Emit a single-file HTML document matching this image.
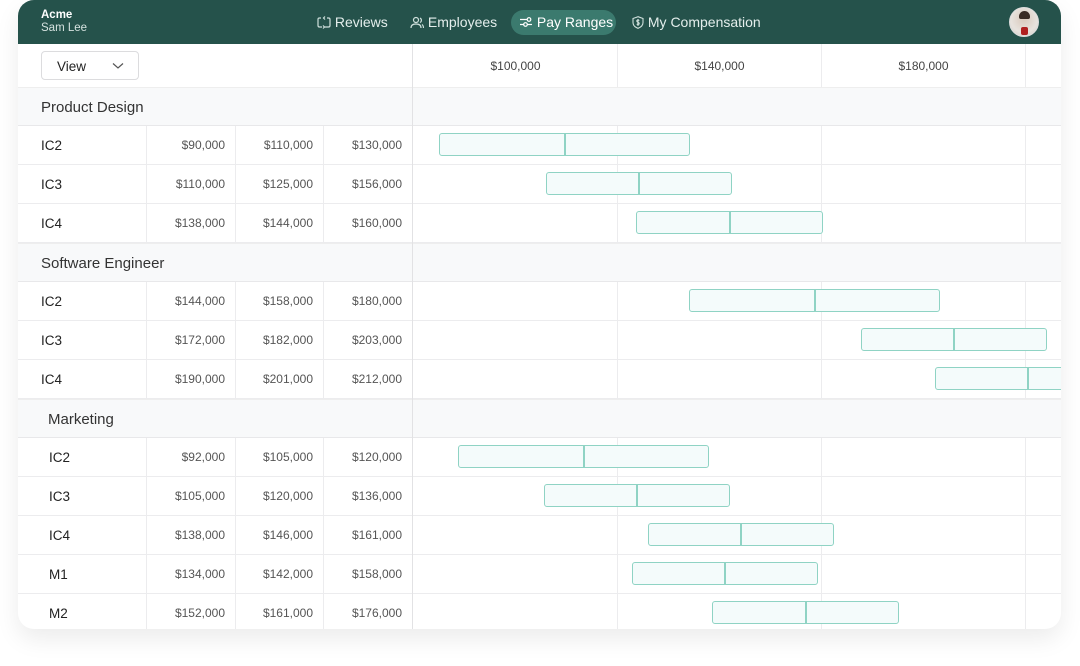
<!DOCTYPE html>
<html><head><meta charset="utf-8"><style>
*{margin:0;padding:0;box-sizing:border-box}
body{width:1080px;height:666px;background:#fff;font-family:"Liberation Sans",sans-serif;position:relative;overflow:hidden}
.card{position:absolute;left:18px;top:0;width:1043px;height:629px;border-radius:16px;overflow:hidden;background:#fff;box-shadow:0 10px 24px rgba(0,0,0,.08)}
.hdr{position:absolute;left:0;top:0;width:1043px;height:44px;background:#25524b;color:#fff;z-index:5}
.a{position:absolute;}
.g{position:absolute;left:0;width:1043px;height:39px;background:#f8f9fa;border-bottom:1px solid #e8e8ea;border-top:1px solid #eee;z-index:3}
.g span{position:absolute;top:11px;font-size:15px;color:#333}
.r{position:absolute;left:0;width:1043px;height:39px;border-bottom:1px solid #ececee}
.r .n{position:absolute;left:23px;top:12px;font-size:13.5px;color:#222}
.r .v{position:absolute;top:12px;font-size:12px;color:#555;text-align:right;width:80px}
.vl{position:absolute;top:44px;width:1px;height:585px;background:#ececee}
.bar{position:absolute;height:23px;border:1.5px solid #8fd3c4;border-radius:3px;background:#f4fbfb;z-index:2}
.bar i{position:absolute;top:0;width:1.5px;height:100%;background:#8fd3c4}
.nav{position:absolute;top:14px;font-size:14px;color:#e4eeec}
</style></head><body>
<div class="card">
<div class="hdr">
<div class="a" style="left:23px;top:9px;font-size:11.5px;font-weight:bold">Acme</div>
<div class="a" style="left:23px;top:22px;font-size:11.5px;color:#d5e2df">Sam Lee</div>
<div class="nav" style="left:299px">
<svg width="14" height="13" viewBox="0 0 14 13" style="vertical-align:-2px" fill="none" stroke="#cfe0dc" stroke-width="1.2"><path d="M4 2H2.5Q1 2 1 3.5V9.5Q1 11 2.5 11H5M10 2H11.5Q13 2 13 3.5V9.5Q13 11 11.5 11H7M6 9.5L7.5 11L6 12.5M8 0.5L6.5 2L8 3.5"/></svg> Reviews</div>
<div class="nav" style="left:392px">
<svg width="14" height="13" viewBox="0 0 14 13" style="vertical-align:-2px" fill="none" stroke="#cfe0dc" stroke-width="1.2"><circle cx="6" cy="4" r="2.5"/><path d="M1 12Q1 8 6 8Q11 8 11 12M10 2A2.5 2.5 0 0 1 10 6.5M12 8.5Q13.5 9.5 13.5 12"/></svg> Employees</div>
<div class="a" style="left:493px;top:10px;width:105px;height:25px;border-radius:13px;background:#3b7a6e"></div>
<div class="nav" style="left:501px;color:#fff">
<svg width="14" height="12" viewBox="0 0 14 12" style="vertical-align:-1px" fill="none" stroke="#fff" stroke-width="1.2"><path d="M1 3.5H8M1 8.5H4.5"/><circle cx="10" cy="3.5" r="1.8"/><circle cx="6.5" cy="8.5" r="1.8"/><path d="M8.5 8.5H13"/></svg> Pay Ranges</div>
<div class="nav" style="left:614px">
<svg width="12" height="13" viewBox="0 0 12 13" style="vertical-align:-2px" fill="none" stroke="#cfe0dc" stroke-width="1.1"><path d="M6 0.7L11 2.5V6.5Q11 10.5 6 12.3Q1 10.5 1 6.5V2.5Z"/><path d="M7.3 4.6Q6 3.7 5 4.4Q4.2 5.3 6 6.2Q7.8 7 7 8.2Q6 8.9 4.7 8"/><path d="M6 3V10"/></svg> My Compensation</div>
<div class="a" style="left:991px;top:7px;width:30px;height:30px;border-radius:50%;background:radial-gradient(circle at 50% 40%,#d9c9bc 0,#e8e3de 60%,#cfc8c2 100%);border:1px solid #ddd"><div class="a" style="left:11px;top:19px;width:7px;height:8px;background:#b02020;border-radius:2px"></div><div class="a" style="left:9px;top:3px;width:11px;height:8px;background:#3a2c25;border-radius:6px 6px 2px 2px"></div></div>
</div>
<div class="a" style="left:23px;top:51px;width:98px;height:29px;border:1px solid #dcdcde;border-radius:4px;font-size:13.5px;color:#222;padding:7px 0 0 15px">View<svg class="a" style="left:70px;top:10px" width="12" height="8" viewBox="0 0 12 8" fill="none" stroke="#555" stroke-width="1.2"><path d="M1 1.5L6 6L11 1.5"/></svg></div>
<div class="a" style="left:395px;top:59px;width:205px;text-align:center;font-size:12px;color:#444">$100,000</div>
<div class="a" style="left:599px;top:59px;width:205px;text-align:center;font-size:12px;color:#444">$140,000</div>
<div class="a" style="left:803px;top:59px;width:205px;text-align:center;font-size:12px;color:#444">$180,000</div>

<div class="g" style="top:87px"><span style="left:23px">Product Design</span></div>
<div class="r" style="top:126px"><span class="n">IC2</span><span class="v" style="left:127px">$90,000</span><span class="v" style="left:215px">$110,000</span><span class="v" style="left:304px">$130,000</span></div>
<div class="r" style="top:165px"><span class="n">IC3</span><span class="v" style="left:127px">$110,000</span><span class="v" style="left:215px">$125,000</span><span class="v" style="left:304px">$156,000</span></div>
<div class="r" style="top:204px"><span class="n">IC4</span><span class="v" style="left:127px">$138,000</span><span class="v" style="left:215px">$144,000</span><span class="v" style="left:304px">$160,000</span></div>
<div class="g" style="top:243px"><span style="left:23px">Software Engineer</span></div>
<div class="r" style="top:282px"><span class="n">IC2</span><span class="v" style="left:127px">$144,000</span><span class="v" style="left:215px">$158,000</span><span class="v" style="left:304px">$180,000</span></div>
<div class="r" style="top:321px"><span class="n">IC3</span><span class="v" style="left:127px">$172,000</span><span class="v" style="left:215px">$182,000</span><span class="v" style="left:304px">$203,000</span></div>
<div class="r" style="top:360px"><span class="n">IC4</span><span class="v" style="left:127px">$190,000</span><span class="v" style="left:215px">$201,000</span><span class="v" style="left:304px">$212,000</span></div>
<div class="g" style="top:399px"><span style="left:30px">Marketing</span></div>
<div class="r" style="top:438px"><span class="n" style="left:31px">IC2</span><span class="v" style="left:127px">$92,000</span><span class="v" style="left:215px">$105,000</span><span class="v" style="left:304px">$120,000</span></div>
<div class="r" style="top:477px"><span class="n" style="left:31px">IC3</span><span class="v" style="left:127px">$105,000</span><span class="v" style="left:215px">$120,000</span><span class="v" style="left:304px">$136,000</span></div>
<div class="r" style="top:516px"><span class="n" style="left:31px">IC4</span><span class="v" style="left:127px">$138,000</span><span class="v" style="left:215px">$146,000</span><span class="v" style="left:304px">$161,000</span></div>
<div class="r" style="top:555px"><span class="n" style="left:31px">M1</span><span class="v" style="left:127px">$134,000</span><span class="v" style="left:215px">$142,000</span><span class="v" style="left:304px">$158,000</span></div>
<div class="r" style="top:594px;border-bottom:none"><span class="n" style="left:31px">M2</span><span class="v" style="left:127px">$152,000</span><span class="v" style="left:215px">$161,000</span><span class="v" style="left:304px">$176,000</span></div>

<div class="a" style="left:128px;top:126px;width:1px;height:117px;background:#ececee"></div>
<div class="a" style="left:217px;top:126px;width:1px;height:117px;background:#ececee"></div>
<div class="a" style="left:305px;top:126px;width:1px;height:117px;background:#ececee"></div>
<div class="a" style="left:128px;top:282px;width:1px;height:117px;background:#ececee"></div>
<div class="a" style="left:217px;top:282px;width:1px;height:117px;background:#ececee"></div>
<div class="a" style="left:305px;top:282px;width:1px;height:117px;background:#ececee"></div>
<div class="a" style="left:128px;top:438px;width:1px;height:191px;background:#ececee"></div>
<div class="a" style="left:217px;top:438px;width:1px;height:191px;background:#ececee"></div>
<div class="a" style="left:305px;top:438px;width:1px;height:191px;background:#ececee"></div>
<div class="vl" style="left:394px;background:#e2e2e4;z-index:4"></div>
<div class="vl" style="left:599px"></div>
<div class="vl" style="left:803px"></div>
<div class="vl" style="left:1007px"></div>

<div class="bar" style="left:421px;top:133px;width:251px"><i style="left:124px"></i></div>
<div class="bar" style="left:528px;top:172px;width:186px"><i style="left:91px"></i></div>
<div class="bar" style="left:618px;top:211px;width:187px"><i style="left:92px"></i></div>
<div class="bar" style="left:671px;top:289px;width:251px"><i style="left:124px"></i></div>
<div class="bar" style="left:843px;top:328px;width:186px"><i style="left:91px"></i></div>
<div class="bar" style="left:917px;top:367px;width:186px"><i style="left:91px"></i></div>
<div class="bar" style="left:440px;top:445px;width:251px"><i style="left:124px"></i></div>
<div class="bar" style="left:526px;top:484px;width:186px"><i style="left:91px"></i></div>
<div class="bar" style="left:630px;top:523px;width:186px"><i style="left:91px"></i></div>
<div class="bar" style="left:614px;top:562px;width:186px"><i style="left:91px"></i></div>
<div class="bar" style="left:694px;top:601px;width:187px"><i style="left:92px"></i></div>
</div>
</body></html>
